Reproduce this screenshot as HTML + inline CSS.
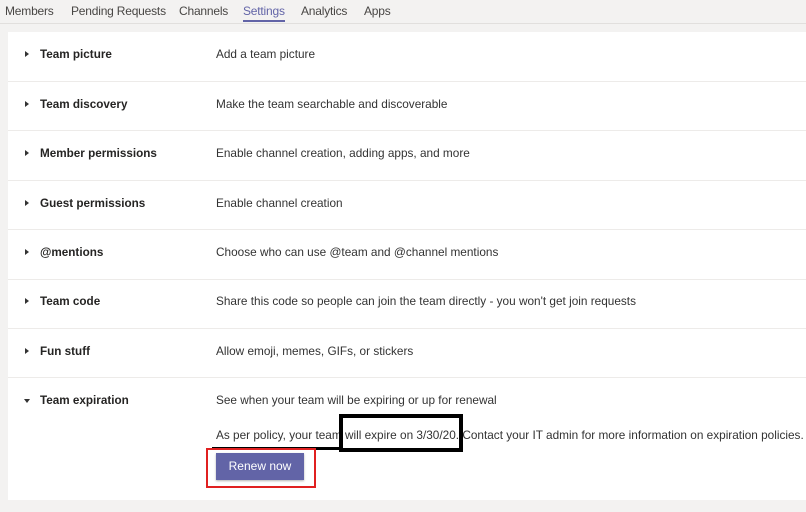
<!DOCTYPE html>
<html><head><style>
body{margin:0;width:806px;height:512px;background:#f3f2f1;font-family:"Liberation Sans",sans-serif;color:#252423;position:relative;overflow:hidden}
.tabs{position:absolute;top:0;left:0;width:806px;height:23px;background:#f3f2f1;border-bottom:1px solid #e1dfdd}
.tab{position:absolute;top:4px;font-size:12px;color:#484644;letter-spacing:-0.2px}
.sel{color:#6264a7}
.ul{position:absolute;left:243px;top:20px;width:42px;height:2px;background:#6264a7}
.panel{position:absolute;left:8px;top:32px;width:798px;height:468px;background:#fff}
.row{position:absolute;left:8px;width:798px;height:49px;border-bottom:1px solid #edebe9}
.t{position:absolute;left:32px;font-size:11.7px;font-weight:bold}
.d{position:absolute;left:208px;font-size:11.8px;color:#333}
.ar{position:absolute;left:17px;width:0;height:0;border-top:3px solid transparent;border-bottom:3px solid transparent;border-left:4px solid #333}
.ard{position:absolute;left:16px;width:0;height:0;border-left:3px solid transparent;border-right:3px solid transparent;border-top:4px solid #333}
</style></head><body>
<div class="tabs">
<span class="tab" style="left:5px">Members</span>
<span class="tab" style="left:71px">Pending Requests</span>
<span class="tab" style="left:179px">Channels</span>
<span class="tab sel" style="left:243px">Settings</span>
<span class="tab" style="left:301px">Analytics</span>
<span class="tab" style="left:364px">Apps</span>
<div class="ul"></div>
</div>
<div class="panel"></div>
<div class="row" style="top:32px"><i class="ar" style="top:19px"></i><span class="t" style="top:16px">Team picture</span><span class="d" style="top:15px">Add a team picture</span></div>
<div class="row" style="top:81px"><i class="ar" style="top:20px"></i><span class="t" style="top:17px">Team discovery</span><span class="d" style="top:16px">Make the team searchable and discoverable</span></div>
<div class="row" style="top:131px"><i class="ar" style="top:19px"></i><span class="t" style="top:16px">Member permissions</span><span class="d" style="top:15px">Enable channel creation, adding apps, and more</span></div>
<div class="row" style="top:180px"><i class="ar" style="top:20px"></i><span class="t" style="top:17px">Guest permissions</span><span class="d" style="top:16px">Enable channel creation</span></div>
<div class="row" style="top:230px"><i class="ar" style="top:19px"></i><span class="t" style="top:16px">@mentions</span><span class="d" style="top:15px">Choose who can use @team and @channel mentions</span></div>
<div class="row" style="top:279px"><i class="ar" style="top:19px"></i><span class="t" style="top:16px">Team code</span><span class="d" style="top:15px">Share this code so people can join the team directly - you won't get join requests</span></div>
<div class="row" style="top:328px"><i class="ar" style="top:20px"></i><span class="t" style="top:17px">Fun stuff</span><span class="d" style="top:16px">Allow emoji, memes, GIFs, or stickers</span></div>
<div style="position:absolute;left:8px;top:378px;width:798px">
<i class="ard" style="top:21px"></i><span class="t" style="top:16px">Team expiration</span><span class="d" style="top:15px">See when your team will be expiring or up for renewal</span>
<span class="d" style="top:50px;white-space:nowrap">As per policy, your team will expire on 3/30/20. Contact your IT admin for more information on expiration policies.</span>
</div>
<div style="position:absolute;left:212px;top:447px;width:128px;height:3px;background:#000"></div>
<div style="position:absolute;left:339px;top:414px;width:116px;height:30px;border:4px solid #000"></div>
<div style="position:absolute;left:206px;top:448px;width:106px;height:36px;border:2px solid #e02020"></div>
<div style="position:absolute;left:216px;top:453px;width:88px;height:27px;background:#6264a7;color:#fff;font-size:12px;line-height:27px;text-align:center;box-shadow:0 1px 2px rgba(0,0,0,.3)">Renew now</div>
</body></html>
